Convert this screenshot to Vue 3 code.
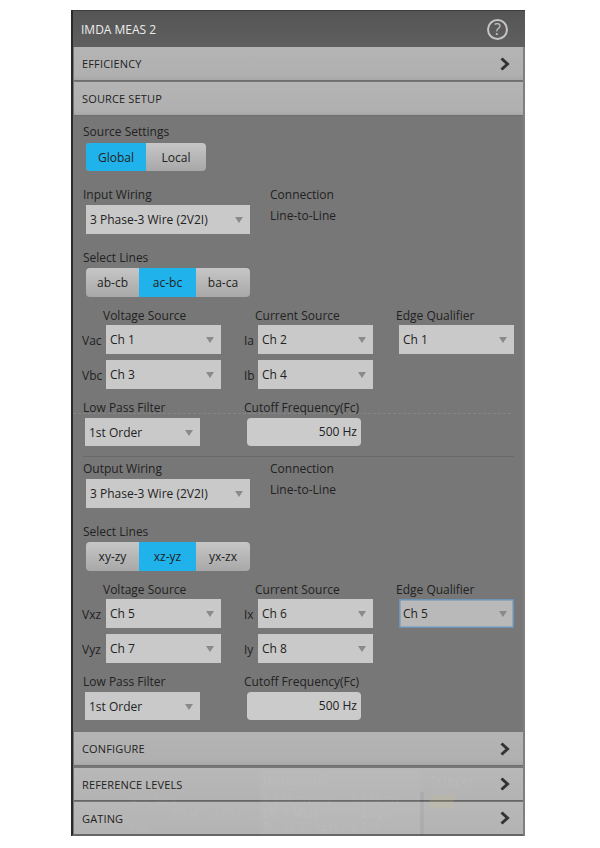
<script setup>
const sections = [
  {
    wiring: 'Input Wiring',
    lines: ['ab-cb', 'ac-bc', 'ba-ca'],
    rows: [
      { v: 'Vac', vc: 'Ch 1', i: 'Ia', ic: 'Ch 2' },
      { v: 'Vbc', vc: 'Ch 3', i: 'Ib', ic: 'Ch 4' },
    ],
    edge: 'Ch 1',
    focus: false,
  },
  {
    wiring: 'Output Wiring',
    lines: ['xy-zy', 'xz-yz', 'yx-zx'],
    rows: [
      { v: 'Vxz', vc: 'Ch 5', i: 'Ix', ic: 'Ch 6' },
      { v: 'Vyz', vc: 'Ch 7', i: 'Iy', ic: 'Ch 8' },
    ],
    edge: 'Ch 5',
    focus: true,
  },
]
</script>

<template>
  <div class="panel">
    <header class="title">
      <span>IMDA MEAS 2</span>
      <span class="help">?</span>
    </header>

    <div class="bar gap-b">
      <span>EFFICIENCY</span>
      <svg class="chev" viewBox="0 0 10 14"><path d="M1.5 1.5 L7.5 7 L1.5 12.5" /></svg>
    </div>
    <div class="bar">
      <span>SOURCE SETUP</span>
    </div>

    <div class="body">
      <div class="scan"></div>
      <div class="label up">Source Settings</div>
      <div class="seg seg-two">
        <span class="on">Global</span>
        <span>Local</span>
      </div>

      <template v-for="(s, n) in sections" :key="s.wiring">
        <div v-if="n === 1" class="rule"></div>
        <div class="wiring" :class="{ first: n === 0 }">
          <div>
            <div class="label up">{{ s.wiring }}</div>
            <div class="dd dd-wide">
              <span>3 Phase-3 Wire (2V2I)</span><i class="tri"></i>
            </div>
          </div>
          <div class="conn">
            <div class="label up">Connection</div>
            <div class="label conn-val">Line-to-Line</div>
          </div>
        </div>

        <div class="label lines-label">Select Lines</div>
        <div class="seg seg-three">
          <span v-for="(l, k) in s.lines" :key="l" :class="{ on: k === 1 }">{{ l }}</span>
        </div>

        <div class="src">
          <div class="label h-volt">Voltage Source</div>
          <div class="label h-curr">Current Source</div>
          <div class="label h-edge">Edge Qualifier</div>

          <template v-for="(r, k) in s.rows" :key="r.v">
            <div class="side side-v">{{ r.v }}</div>
            <div class="dd"><span>{{ r.vc }}</span><i class="tri"></i></div>
            <div class="side side-i">{{ r.i }}</div>
            <div class="dd"><span>{{ r.ic }}</span><i class="tri"></i></div>
            <div v-if="k === 0" class="dd edge" :class="{ focus: s.focus }">
              <span>{{ s.edge }}</span><i class="tri"></i>
            </div>
          </template>
        </div>

        <div class="filter">
          <div>
            <div class="label">Low Pass Filter</div>
            <div class="dd dd-lpf"><span>1st Order</span><i class="tri"></i></div>
          </div>
          <div class="cutoff">
            <div class="label">Cutoff Frequency(Fc)</div>
            <div class="num">500 Hz</div>
          </div>
        </div>
      </template>
    </div>

    <div class="bar gap-b2">
      <span>CONFIGURE</span>
      <svg class="chev" viewBox="0 0 10 14"><path d="M1.5 1.5 L7.5 7 L1.5 12.5" /></svg>
    </div>

    <div class="lower">
      <div class="bar light gap-b">
        <span>REFERENCE LEVELS</span>
        <svg class="chev" viewBox="0 0 10 14"><path d="M1.5 1.5 L7.5 7 L1.5 12.5" /></svg>
      </div>
      <div class="bar light">
        <span>GATING</span>
        <svg class="chev" viewBox="0 0 10 14"><path d="M1.5 1.5 L7.5 7 L1.5 12.5" /></svg>
      </div>

      <div class="ghost">
        <div class="ghost-h"></div>
        <div class="ghost-t"></div>
        <span class="g g-hz">Horizontal</span>
        <span class="g g-tr">Trigger</span>
        <span class="g-pill"></span>
        <span class="g g1">0.333 ms/div</span>
        <span class="g g2">3.333 ms</span>
        <span class="g g3">SR: 1 MS/s</span>
        <span class="g g4">1 ps/pt</span>
        <span class="g g5">RL: 33.33 kpts</span>
        <span class="g g6">8.50%</span>
        <span class="g g7">Add New</span>
        <span class="g g8">PWM</span>
        <span class="g g9">AFG</span>
        <span class="g g10">Bus</span>
      </div>
    </div>
  </div>
</template>

<style scoped>
.panel {
  box-sizing: border-box;
  width: 454px;
  margin: 10px 0 0 71px;
  background: #777;
  border-left: 2px solid #2a2a2a;
  border-right: 2px solid #7f7f7f;
  border-bottom: 1px solid #666;
  font-family: "Open Sans", "Noto Sans", sans-serif;
  font-size: 12px;
  color: #222;
}
.title {
  box-sizing: border-box;
  height: 37px;
  display: flex;
  align-items: center;
  justify-content: space-between;
  padding: 1px 17px 0 8px;
  background: linear-gradient(#555, #5f5f5f);
  border-top: 1px solid #3c3c3c;
  color: #ececec;
  margin-right: -2px;
}
.help {
  box-sizing: border-box;
  width: 21px;
  height: 21px;
  border: 2px solid #c4c4c4;
  border-radius: 50%;
  color: #c4c4c4;
  font-size: 16px;
  line-height: 17px;
  text-align: center;
}
.bar {
  box-sizing: border-box;
  height: 34px;
  margin-left: 1px;
  display: flex;
  align-items: center;
  justify-content: space-between;
  padding: 0 13px 0 8px;
  background: linear-gradient(#b4b4b4, #b0b0b0 85%, #a8a8a8);
  border-bottom: 1px solid #6e6e6e;
  color: #222;
  font-size: 11px;
  letter-spacing: 0.15px;
}
.gap-b {
  margin-bottom: 1px;
}
.gap-b2 {
  margin-bottom: 2px;
}
.light {
  height: 33px;
  background: linear-gradient(#b8b8b8, #b3b3b3);
  border-bottom: 1px solid #666;
}
.chev {
  width: 10px;
  height: 14px;
  fill: none;
  stroke: #333;
  stroke-width: 3;
}
.body {
  position: relative;
  box-sizing: border-box;
  height: 616px;
  padding: 9px 0 0 10px;
}
.scan {
  position: absolute;
  left: 0;
  right: 12px;
  top: 297px;
  border-top: 1px dashed #858585;
}
.label {
  height: 14px;
  line-height: 16px;
  white-space: nowrap;
  position: relative;
}
.label.up {
  line-height: 14px;
}
.seg {
  margin: 4px 0 0 3px;
  display: flex;
  border-radius: 4px;
  overflow: hidden;
  background: linear-gradient(#c6c6c6, #a8a8a8);
}
.seg span {
  display: flex;
  align-items: center;
  justify-content: center;
  box-sizing: border-box;
}
.seg .on {
  background: #20b2ea;
}
.seg-two {
  width: 120px;
  height: 28px;
}
.seg-two span {
  width: 60px;
}
.seg-three {
  width: 164px;
  height: 29px;
}
.seg-three span:nth-child(1) {
  width: 53px;
}
.seg-three span:nth-child(2) {
  width: 57px;
}
.seg-three span:nth-child(3) {
  width: 54px;
}
.wiring {
  display: flex;
  margin-top: 5px;
}
.wiring.first {
  margin-top: 17px;
}
.dd {
  box-sizing: border-box;
  height: 29px;
  margin-top: 3px;
  display: flex;
  align-items: center;
  justify-content: space-between;
  padding: 0 7px 0 4px;
  background: #c9c9c9;
}
.dd-wide {
  width: 164px;
  margin-left: 3px;
}
.tri {
  width: 0;
  height: 0;
  border-left: 4px solid transparent;
  border-right: 4px solid transparent;
  border-top: 6px solid #8a8a8a;
  margin-top: 1px;
}
.conn {
  margin-left: 20px;
}
.conn-val {
  margin-top: 6px;
}
.lines-label {
  margin-top: 16px;
}
.src {
  margin-top: 11px;
  display: grid;
  grid-template-columns: 23px 115px 23px 14px 115px 26px 115px;
  grid-template-rows: 14px 32px 35px;
  align-items: end;
}
.src .dd {
  margin-top: 0;
}
.h-volt {
  grid-column: 1 / 3;
  padding-left: 20px;
}
.h-curr {
  grid-column: 3 / 6;
  padding-left: 34px;
}
.h-edge {
  grid-column: 6 / 8;
  padding-left: 23px;
}
.side {
  height: 29px;
  line-height: 32px;
}
.side-v {
  grid-column: 1;
  margin-left: -1px;
}
.side-i {
  grid-column: 4;
}
.edge {
  grid-column: 7;
}
.edge.focus {
  background: #b9b9b9;
  box-shadow: inset 0 0 0 1.5px #6c93b8;
}
.filter {
  display: flex;
  margin-top: 11px;
}
.dd-lpf {
  width: 115px;
  height: 28px;
  margin: 4px 0 0 2px;
}
.cutoff {
  margin-left: 44px;
}
.num {
  box-sizing: border-box;
  width: 114px;
  height: 28px;
  margin: 4px 0 0 3px;
  padding-right: 4px;
  line-height: 28px;
  text-align: right;
  background: #cbcbcb;
  border-radius: 4px;
}
.rule {
  margin: 10px 9px 0 0;
  border-top: 1px solid #6a6a6a;
}
.lower {
  position: relative;
}
.ghost {
  position: absolute;
  inset: 0;
  pointer-events: none;
  overflow: hidden;
}
.ghost-h {
  position: absolute;
  left: 187px;
  top: 2px;
  width: 160px;
  height: 65px;
  background: rgba(255, 255, 255, 0.03);
}
.ghost-t {
  position: absolute;
  left: 347px;
  top: 24px;
  width: 4px;
  height: 43px;
  background: rgba(0, 0, 0, 0.04);
}
.g {
  position: absolute;
  color: rgba(255, 255, 255, 0.08);
  font-size: 10px;
  letter-spacing: 0.8px;
  line-height: 14px;
  white-space: nowrap;
}
.g-hz { left: 190px; top: 6px; font-size: 12px; }
.g-tr { left: 357px; top: 6px; font-size: 12px; }
.g-pill {
  position: absolute;
  left: 357px;
  top: 27px;
  width: 24px;
  height: 13px;
  border-radius: 3px;
  background: rgba(210, 200, 110, 0.14);
}
.g1 { left: 190px; top: 24px; }
.g2 { left: 278px; top: 24px; }
.g3 { left: 190px; top: 38px; }
.g4 { left: 278px; top: 38px; }
.g5 { left: 190px; top: 52px; }
.g6 { left: 278px; top: 52px; }
.g7 { left: 57px; top: 25px; }
.g8 { left: 99px; top: 38px; }
.g9 { left: 141px; top: 38px; }
.g10 { left: 55px; top: 52px; }
</style>
